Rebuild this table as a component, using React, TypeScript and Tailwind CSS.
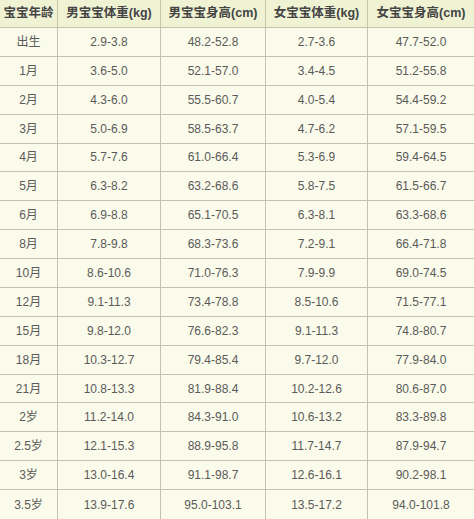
import React from "react";

const header = ["宝宝年龄", "男宝宝体重(kg)", "男宝宝身高(cm)", "女宝宝体重(kg)", "女宝宝身高(cm)"];
const rows: string[][] = [
  ["出生", "2.9-3.8", "48.2-52.8", "2.7-3.6", "47.7-52.0"],
  ["1月", "3.6-5.0", "52.1-57.0", "3.4-4.5", "51.2-55.8"],
  ["2月", "4.3-6.0", "55.5-60.7", "4.0-5.4", "54.4-59.2"],
  ["3月", "5.0-6.9", "58.5-63.7", "4.7-6.2", "57.1-59.5"],
  ["4月", "5.7-7.6", "61.0-66.4", "5.3-6.9", "59.4-64.5"],
  ["5月", "6.3-8.2", "63.2-68.6", "5.8-7.5", "61.5-66.7"],
  ["6月", "6.9-8.8", "65.1-70.5", "6.3-8.1", "63.3-68.6"],
  ["8月", "7.8-9.8", "68.3-73.6", "7.2-9.1", "66.4-71.8"],
  ["10月", "8.6-10.6", "71.0-76.3", "7.9-9.9", "69.0-74.5"],
  ["12月", "9.1-11.3", "73.4-78.8", "8.5-10.6", "71.5-77.1"],
  ["15月", "9.8-12.0", "76.6-82.3", "9.1-11.3", "74.8-80.7"],
  ["18月", "10.3-12.7", "79.4-85.4", "9.7-12.0", "77.9-84.0"],
  ["21月", "10.8-13.3", "81.9-88.4", "10.2-12.6", "80.6-87.0"],
  ["2岁", "11.2-14.0", "84.3-91.0", "10.6-13.2", "83.3-89.8"],
  ["2.5岁", "12.1-15.3", "88.9-95.8", "11.7-14.7", "87.9-94.7"],
  ["3岁", "13.0-16.4", "91.1-98.7", "12.6-16.1", "90.2-98.1"],
  ["3.5岁", "13.9-17.6", "95.0-103.1", "13.5-17.2", "94.0-101.8"],
];

export default function App() {
  return (
    <div
      className="w-[474px] h-[519px] overflow-hidden bg-[#fafbea] grid grid-cols-[58px_103px_105px_102px_106px] grid-rows-[28px_repeat(17,minmax(0,1fr))]"
      style={{ fontFamily: '"Liberation Sans", "Noto Sans CJK SC", sans-serif' }}
    >
      {header.map((h, i) => (
        <div
          key={"h" + i}
          className={`flex items-center justify-center bg-[#eff3d4] border-b border-[#c2c4ae] text-[12.5px] font-bold text-[#444444] ${i < 4 ? "border-r" : ""}`}
        >
          {h}
        </div>
      ))}
      {rows.map((r, ri) =>
        r.map((c, ci) => (
          <div
            key={ri + "-" + ci}
            className={`flex items-center justify-center border-[#c2c4ae] text-[12px] text-[#5a5a5a] ${ci < 4 ? "border-r" : ""} ${ri < rows.length - 1 ? "border-b" : ""}`}
          >
            {c}
          </div>
        ))
      )}
    </div>
  );
}
